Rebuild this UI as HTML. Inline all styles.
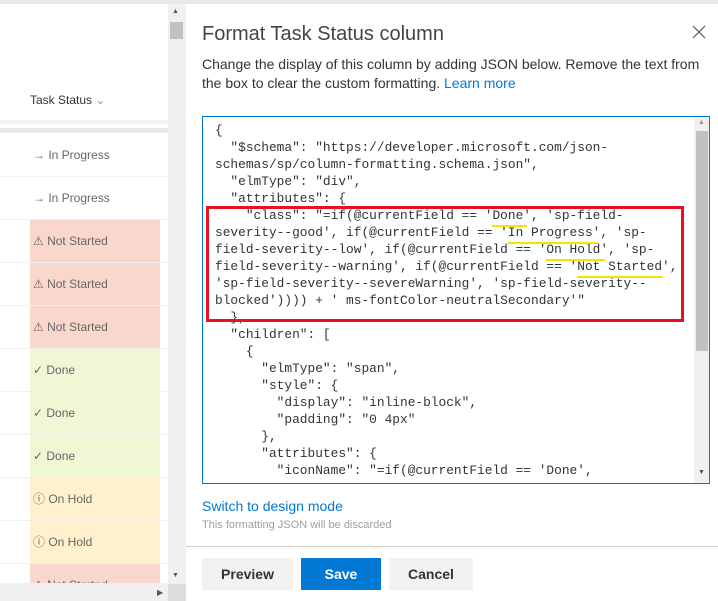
<!DOCTYPE html>
<html><head><meta charset="utf-8"><style>
*{margin:0;padding:0;box-sizing:border-box}
html,body{width:718px;height:601px;overflow:hidden}
body{background:#fff;font-family:"Liberation Sans",sans-serif;position:relative}
.abs{position:absolute}
.row{position:absolute;left:0;width:168px;height:43px;border-bottom:1px solid #f0f0f0}
.cell{position:absolute;left:30px;top:0;width:130px;height:42px;font-size:12px;color:#666;line-height:42px;padding-left:3px;white-space:nowrap}
pre{font-family:"Liberation Mono",monospace;font-size:12.85px;line-height:17px;color:#333}
.btn{position:absolute;top:558px;height:32px;font-size:14px;font-weight:bold;text-align:center;line-height:32px;background:#f3f2f1;color:#333}
.ul{position:absolute;height:2px;background:#f5e400}
</style></head><body>
<div class="abs" style="left:0;top:0;width:718px;height:4px;background:#e8e8e8"></div>
<div class="abs" style="left:30px;top:93px;font-size:12px;color:#333">Task Status <span style="color:#999">&#8964;</span></div>
<div class="abs" style="left:0;top:120px;width:168px;height:4px;background:#f4f4f4"></div>
<div class="abs" style="left:0;top:128px;width:168px;height:5px;background:#e8e8e8"></div>
<div class="row" style="top:134px"><div class="cell">→ In Progress</div></div>
<div class="row" style="top:177px"><div class="cell">→ In Progress</div></div>
<div class="row" style="top:220px"><div class="cell" style="background:#f9d7cc">⚠ Not Started</div></div>
<div class="row" style="top:263px"><div class="cell" style="background:#f9d7cc">⚠ Not Started</div></div>
<div class="row" style="top:306px"><div class="cell" style="background:#f9d7cc">⚠ Not Started</div></div>
<div class="row" style="top:349px"><div class="cell" style="background:#f0f7d4">✓ Done</div></div>
<div class="row" style="top:392px"><div class="cell" style="background:#f0f7d4">✓ Done</div></div>
<div class="row" style="top:435px"><div class="cell" style="background:#f0f7d4">✓ Done</div></div>
<div class="row" style="top:478px"><div class="cell" style="background:#fff1cc">ⓘ On Hold</div></div>
<div class="row" style="top:521px"><div class="cell" style="background:#fff1cc">ⓘ On Hold</div></div>
<div class="row" style="top:564px;height:20px;overflow:hidden"><div class="cell" style="background:#f9d7cc">⚠ Not Started</div></div>
<div class="abs" style="left:0;top:584px;width:168px;height:17px;background:#f0f0f0"></div>
<div class="abs" style="left:157px;top:588px;font-size:8px;color:#555">▶</div>
<div class="abs" style="left:168px;top:4px;width:18px;height:597px;background:#f0f0f0"></div>
<div class="abs" style="left:170px;top:22px;width:13px;height:17px;background:#c1c1c1"></div>
<div class="abs" style="left:172px;top:8px;font-size:7px;color:#555">▲</div>
<div class="abs" style="left:172px;top:572px;font-size:7px;color:#555">▼</div>
<div class="abs" style="left:168px;top:584px;width:18px;height:17px;background:#dcdcdc"></div>
<div class="abs" style="left:202px;top:23px;font-size:20px;color:#444">Format Task Status column</div>
<svg class="abs" style="left:692px;top:25px" width="14" height="14"><path d="M1 1L13 13M13 1L1 13" stroke="#555" stroke-width="1.2"/></svg>
<div class="abs" style="left:202px;top:55px;width:505px;font-size:14px;line-height:19px;color:#333">Change the display of this column by adding JSON below. Remove the text from the box to clear the custom formatting. <span style="color:#0078d4">Learn more</span></div>
<div class="abs" style="left:202px;top:116px;width:508px;height:368px;border:1px solid #0078d4;overflow:hidden">
<pre style="position:absolute;left:12px;top:5px">{
  "$schema": "https://developer.microsoft.com/json-
schemas/sp/column-formatting.schema.json",
  "elmType": "div",
  "attributes": {
    "class": "=if(@currentField == 'Done', 'sp-field-
severity--good', if(@currentField == 'In Progress', 'sp-
field-severity--low', if(@currentField == 'On Hold', 'sp-
field-severity--warning', if(@currentField == 'Not Started',
'sp-field-severity--severeWarning', 'sp-field-severity--
blocked')))) + ' ms-fontColor-neutralSecondary'"
  },
  "children": [
    {
      "elmType": "span",
      "style": {
        "display": "inline-block",
        "padding": "0 4px"
      },
      "attributes": {
        "iconName": "=if(@currentField == 'Done',</pre>
<div class="abs" style="left:491px;top:0;width:16px;height:366px;background:#f0f0f0"></div>
<div class="abs" style="left:493px;top:14px;width:12px;height:220px;background:#c1c1c1"></div>
<div class="abs" style="left:495px;top:2px;font-size:7px;color:#999">▲</div>
<div class="abs" style="left:495px;top:352px;font-size:7px;color:#555">▼</div>
</div>
<div class="ul" style="left:492px;top:225px;width:35px"></div>
<div class="ul" style="left:508px;top:242px;width:90px"></div>
<div class="ul" style="left:546px;top:259px;width:59px"></div>
<div class="ul" style="left:577px;top:276px;width:86px"></div>
<div class="abs" style="left:206px;top:206px;width:478px;height:116px;border:3px solid #e81123"></div>
<div class="abs" style="left:202px;top:498px;font-size:14px;color:#0078d4">Switch to design mode</div>
<div class="abs" style="left:202px;top:519px;font-size:11px;color:#a19f9d">This formatting JSON will be discarded</div>
<div class="abs" style="left:186px;top:546px;width:532px;height:1px;background:#d0d0d0"></div>
<div class="btn" style="left:202px;width:91px">Preview</div>
<div class="btn" style="left:301px;width:80px;background:#0078d4;color:#fff">Save</div>
<div class="btn" style="left:389px;width:84px">Cancel</div>
</body></html>
